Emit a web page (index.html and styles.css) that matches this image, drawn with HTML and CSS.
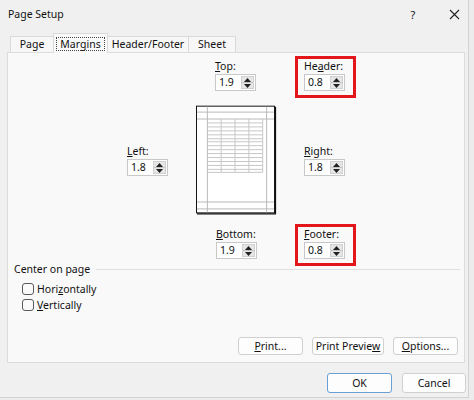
FILE: index.html
```html
<!DOCTYPE html>
<html>
<head>
<meta charset="utf-8">
<link rel="stylesheet" href="styles.css">
</head>
<body>
<div class="window">
  <div class="titlebar">
    <span class="title">Page Setup</span>
    <span class="help">?</span>
    <span class="close"><svg width="11" height="11" viewBox="0 0 11 11"><path d="M1 1 L10 10 M10 1 L1 10" stroke="#222" stroke-width="1.1" fill="none"/></svg></span>
  </div>
  <div class="tabs">
    <div class="tab t-page">Page</div>
    <div class="tab active t-margins"><span class="focus">Margins</span></div>
    <div class="tab t-hf">Header/Footer</div>
    <div class="tab t-sheet">Sheet</div>
  </div>
  <div class="panel">
    <div class="mgrid">
      <div class="fbox f-top">
        <div class="flabel"><u>T</u>op:</div>
        <div class="spin"><span class="val">1.9</span><span class="arrows"><span class="up"><svg width="7" height="4" viewBox="0 0 7 4"><path d="M0 4 L3.5 0 L7 4Z" fill="#222"/></svg></span><span class="dn"><svg width="7" height="4" viewBox="0 0 7 4"><path d="M0 0 L3.5 4 L7 0Z" fill="#222"/></svg></span></span></div>
      </div>
      <div class="fbox hl f-header">
        <div class="flabel">He<u>a</u>der:</div>
        <div class="spin"><span class="val">0.8</span><span class="arrows"><span class="up"><svg width="7" height="4" viewBox="0 0 7 4"><path d="M0 4 L3.5 0 L7 4Z" fill="#222"/></svg></span><span class="dn"><svg width="7" height="4" viewBox="0 0 7 4"><path d="M0 0 L3.5 4 L7 0Z" fill="#222"/></svg></span></span></div>
      </div>
      <div class="fbox f-left">
        <div class="flabel"><u>L</u>eft:</div>
        <div class="spin"><span class="val">1.8</span><span class="arrows"><span class="up"><svg width="7" height="4" viewBox="0 0 7 4"><path d="M0 4 L3.5 0 L7 4Z" fill="#222"/></svg></span><span class="dn"><svg width="7" height="4" viewBox="0 0 7 4"><path d="M0 0 L3.5 4 L7 0Z" fill="#222"/></svg></span></span></div>
      </div>
      <div class="pagebox">
        <svg width="82" height="111" viewBox="0 0 82 111">
          <rect x="0.5" y="0.5" width="79" height="108" fill="#fff" stroke="#111"/>
          <path d="M80.5 1 V110 M1 109.5 H81" stroke="#111" stroke-width="1.2"/>
          <g stroke="#b8b8b8" stroke-width="1">
            <path d="M11.5 1 V108 M71.5 1 V108 M1 6.5 H79 M1 13.5 H79 M1 97.5 H79 M1 104.5 H79"/>
          </g>
          <g stroke="#c6c6c6" stroke-width="1">
            <path d="M25.5 13.5 V67.5 M39.5 13.5 V67.5 M53.5 13.5 V67.5 M67.5 13.5 V67.5"/>
            <path d="M11.5 17.5 H67.5 M11.5 21.5 H67.5 M11.5 25.5 H67.5 M11.5 29.5 H67.5 M11.5 33.5 H67.5 M11.5 36.5 H67.5 M11.5 40.5 H67.5 M11.5 44.5 H67.5 M11.5 48.5 H67.5 M11.5 52.5 H67.5 M11.5 56.5 H67.5 M11.5 60.5 H67.5 M11.5 64.5 H67.5 M11.5 67.5 H67.5"/>
          </g>
        </svg>
      </div>
      <div class="fbox f-right">
        <div class="flabel"><u>R</u>ight:</div>
        <div class="spin"><span class="val">1.8</span><span class="arrows"><span class="up"><svg width="7" height="4" viewBox="0 0 7 4"><path d="M0 4 L3.5 0 L7 4Z" fill="#222"/></svg></span><span class="dn"><svg width="7" height="4" viewBox="0 0 7 4"><path d="M0 0 L3.5 4 L7 0Z" fill="#222"/></svg></span></span></div>
      </div>
      <div class="fbox f-bottom">
        <div class="flabel"><u>B</u>ottom:</div>
        <div class="spin"><span class="val">1.9</span><span class="arrows"><span class="up"><svg width="7" height="4" viewBox="0 0 7 4"><path d="M0 4 L3.5 0 L7 4Z" fill="#222"/></svg></span><span class="dn"><svg width="7" height="4" viewBox="0 0 7 4"><path d="M0 0 L3.5 4 L7 0Z" fill="#222"/></svg></span></span></div>
      </div>
      <div class="fbox hl f-footer">
        <div class="flabel"><u>F</u>ooter:</div>
        <div class="spin"><span class="val">0.8</span><span class="arrows"><span class="up"><svg width="7" height="4" viewBox="0 0 7 4"><path d="M0 4 L3.5 0 L7 4Z" fill="#222"/></svg></span><span class="dn"><svg width="7" height="4" viewBox="0 0 7 4"><path d="M0 0 L3.5 4 L7 0Z" fill="#222"/></svg></span></span></div>
      </div>
    </div>
    <div class="group">
      <div class="gtitle"><span>Center on page</span><span class="rule"></span></div>
      <div class="check"><span class="cbox"></span><span>Hori<u>z</u>ontally</span></div>
      <div class="check"><span class="cbox"></span><span><u>V</u>ertically</span></div>
    </div>
    <div class="pbuttons">
      <div class="btn b-print"><u>P</u>rint...</div>
      <div class="btn b-preview">Print Previe<u>w</u></div>
      <div class="btn b-options"><u>O</u>ptions...</div>
    </div>
  </div>
  <div class="dbuttons">
    <div class="btn b-ok">OK</div>
    <div class="btn b-cancel">Cancel</div>
  </div>
</div>
</body>
</html>
```

FILE: styles.css
```css
* { box-sizing: border-box; }
html, body { margin: 0; padding: 0; }
body {
  width: 474px;
  height: 400px;
  overflow: hidden;
  background: #ececec;
  font-family: "Noto Sans", "Segoe UI", sans-serif;
  font-size: 10.5px;
  color: #111;
}
u { text-decoration: underline; text-underline-offset: 1px; }

.window {
  width: 469px;
  height: 398px;
  background: #f0f0f0;
  border-right: 1px solid #d2d2d2;
  border-bottom: 1px solid #d2d2d2;
  display: flex;
  flex-direction: column;
}

.titlebar {
  height: 28px;
  display: flex;
  align-items: center;
  padding-left: 8px;
  font-size: 10.5px;
}
.title { flex: 1; }
.help {
  width: 20px;
  text-align: center;
  font-size: 11px;
}
.close {
  width: 20px;
  margin-left: 21px;
  margin-right: 4px;
  display: flex;
  justify-content: center;
}

.tabs {
  height: 24px;
  display: flex;
  align-items: flex-end;
  margin-left: 10px;
  position: relative;
  z-index: 1;
}
.tab {
  height: 16px;
  line-height: 15px;
  text-align: center;
  background: #f7f7f7;
  border: 1px solid #dadada;
  border-bottom: none;
  margin-left: -1px;
}
.tab.active {
  height: 20px;
  background: #f9f9f9;
  margin-bottom: -1px;
  padding-top: 3px;
  line-height: 14px;
}
.t-page { width: 44px; margin-left: 0; }
.t-margins { width: 55px; }
.t-hf { width: 82px; }
.t-sheet { width: 48px; }
.focus {
  display: inline-block;
  border: 1px dotted #444;
  padding: 0 3px;
  line-height: 12px;
  height: 14px;
}

.panel {
  height: 311px;
  margin: 0 3px 0 7px;
  background: #f9f9f9;
  border: 1px solid #dcdcdc;
  display: flex;
  flex-direction: column;
}

.mgrid {
  display: grid;
  grid-template-columns: 78px 81px auto;
  grid-template-rows: 49px 110px auto;
  margin-top: 3px;
  margin-left: 110px;
}
.fbox {
  border: 2px solid transparent;
  padding: 1px 9px 5px 7px;
  width: 61px;
  height: 42px;
}
.fbox.hl {
  border: 3px solid #e3161c;
  padding: 0 8px 4px 6px;
}
.f-top { grid-column: 2; grid-row: 1; margin-left: 10px; }
.f-header { grid-column: 3; grid-row: 1; margin-left: 18px; }
.f-left { grid-column: 1; grid-row: 2; margin-top: 36px; }
.pagebox { grid-column: 2; grid-row: 2; display: flex; }
.f-right { grid-column: 3; grid-row: 2; margin-left: 18px; margin-top: 36px; }
.f-bottom { grid-column: 2; grid-row: 3; margin-left: 11px; margin-top: 9px; }
.f-footer { grid-column: 3; grid-row: 3; margin-left: 18px; margin-top: 9px; }

.flabel { height: 14px; line-height: 14px; white-space: nowrap; }
.spin {
  margin-top: 1px;
  width: 41px;
  height: 17px;
  background: #fff;
  border: 1px solid #c8c8c8;
  display: flex;
}
.val { flex: 1; padding-left: 3px; line-height: 15px; }
.arrows {
  width: 13px;
  margin: 1px 1px 1px 0;
  background: #e6e6e6;
  border: 1px solid #d0d0d0;
  display: flex;
  flex-direction: column;
}
.arrows .up, .arrows .dn {
  flex: 1;
  display: flex;
  align-items: center;
  justify-content: center;
}
.arrows .up { border-bottom: 1px solid #c4c4c4; }

.group {
  margin-top: -4px;
  padding-left: 6px;
}
.gtitle {
  height: 14px;
  line-height: 14px;
  display: flex;
  align-items: center;
}
.rule {
  flex: 1;
  height: 0;
  border-top: 1px solid #e0e0e0;
  margin-left: 6px;
  margin-right: 4px;
}
.check {
  height: 16px;
  display: flex;
  align-items: center;
  padding-left: 8px;
}
.group .check:nth-child(2) { margin-top: 5px; }
.cbox {
  width: 12px;
  height: 12px;
  border: 1px solid #5a5a5a;
  border-radius: 3px;
  background: #fafafa;
  margin-right: 3px;
}

.pbuttons {
  margin-top: auto;
  padding: 0 6px 7px 0;
  display: flex;
  justify-content: flex-end;
  gap: 9px;
}
.btn {
  height: 18px;
  line-height: 16px;
  text-align: center;
  background: #fdfdfd;
  border: 1px solid #d0d0d0;
  border-radius: 3px;
}
.b-print { width: 65px; }
.b-preview { width: 72px; }
.b-options { width: 65px; }

.dbuttons {
  margin-top: 10px;
  padding-right: 2px;
  display: flex;
  justify-content: flex-end;
  gap: 10px;
}
.dbuttons .btn { height: 20px; line-height: 18px; }
.b-ok { width: 65px; border-color: #6a9fd4; }
.b-cancel { width: 64px; }
```
